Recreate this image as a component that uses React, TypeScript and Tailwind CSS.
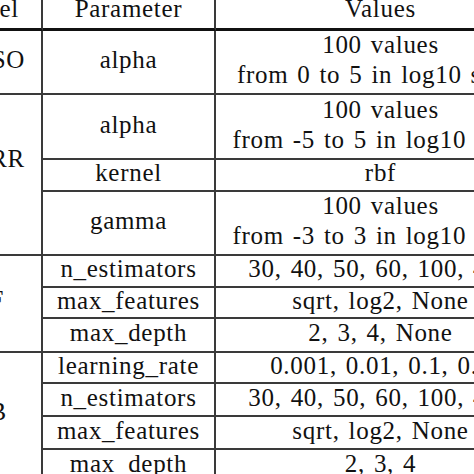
type Row = { param: string; values: string[] };
type Group = { model: string; span: string; labelClass: string; rows: Row[] };

const groups: Group[] = [
  {
    model: 'LASSO',
    span: 'row-span-1',
    labelClass: 'items-center pr-[16px] pb-[4px]',
    rows: [{ param: 'alpha', values: ['100 values', 'from 0 to 5 in log10 scale'] }],
  },
  {
    model: 'KRR',
    span: 'row-span-3',
    labelClass: 'items-start pr-[16px] pt-[49px]',
    rows: [
      { param: 'alpha', values: ['100 values', 'from -5 to 5 in log10 scale'] },
      { param: 'kernel', values: ['rbf'] },
      { param: 'gamma', values: ['100 values', 'from -3 to 3 in log10 scale'] },
    ],
  },
  {
    model: 'RF',
    span: 'row-span-3',
    labelClass: 'items-center pr-[37px] pb-[8px]',
    rows: [
      { param: 'n_estimators', values: ['30, 40, 50, 60, 100, 400'] },
      { param: 'max_features', values: ['sqrt, log2, None'] },
      { param: 'max_depth', values: ['2, 3, 4, None'] },
    ],
  },
  {
    model: 'GB',
    span: 'row-span-4',
    labelClass: 'items-center pr-[34px] pb-[10px]',
    rows: [
      { param: 'learning_rate', values: ['0.001, 0.01, 0.1, 0.5'] },
      { param: 'n_estimators', values: ['30, 40, 50, 60, 100, 400'] },
      { param: 'max_features', values: ['sqrt, log2, None'] },
      { param: 'max_depth', values: ['2, 3, 4'] },
    ],
  },
];

const text =
  "[font-family:'Liberation_Serif','Times_New_Roman',serif] text-[25px] leading-[30px] tracking-[0.7px] [word-spacing:2px] text-[#111] whitespace-nowrap";
const line = 'border-b-2 border-[#3a3a3a]';

export default function App() {
  return (
    <div className="w-[474px] h-[474px] overflow-hidden bg-white">
      <div
        className={`ml-[-72px] w-max grid grid-cols-[115px_173px_329px] grid-rows-[31px_64px_65px_32px_64px_32px_31px_34px_31px_33px_33px_33px] ${text}`}
      >
        {/* header */}
        <div className="flex items-center justify-center pb-[10px] border-b-[3px] border-b-[#111] border-r-2 border-r-[#3a3a3a]">
          Model
        </div>
        <div className="flex items-center justify-center pb-[10px] border-b-[3px] border-b-[#111] border-r-2 border-r-[#3a3a3a]">
          Parameter
        </div>
        <div className="flex items-center justify-center pb-[10px] border-b-[3px] border-b-[#111]">
          Values
        </div>

        {groups.map((g) =>
          g.rows.map((r, i) => (
            <>
              {i === 0 && (
                <div
                  key={g.model}
                  className={`${g.span} flex justify-end ${g.labelClass} ${line} border-r-2 border-r-[#3a3a3a]`}
                >
                  {g.model}
                </div>
              )}
              <div
                key={g.model + r.param}
                className={`flex items-center justify-center pb-[4px] ${line} border-r-2 border-r-[#3a3a3a]`}
              >
                {r.param}
              </div>
              <div
                key={g.model + r.param + 'v'}
                className={`flex flex-col items-center justify-center pb-[4px] ${line}`}
              >
                {r.values.map((v) => (
                  <span key={v}>{v}</span>
                ))}
              </div>
            </>
          ))
        )}
      </div>
    </div>
  );
}
